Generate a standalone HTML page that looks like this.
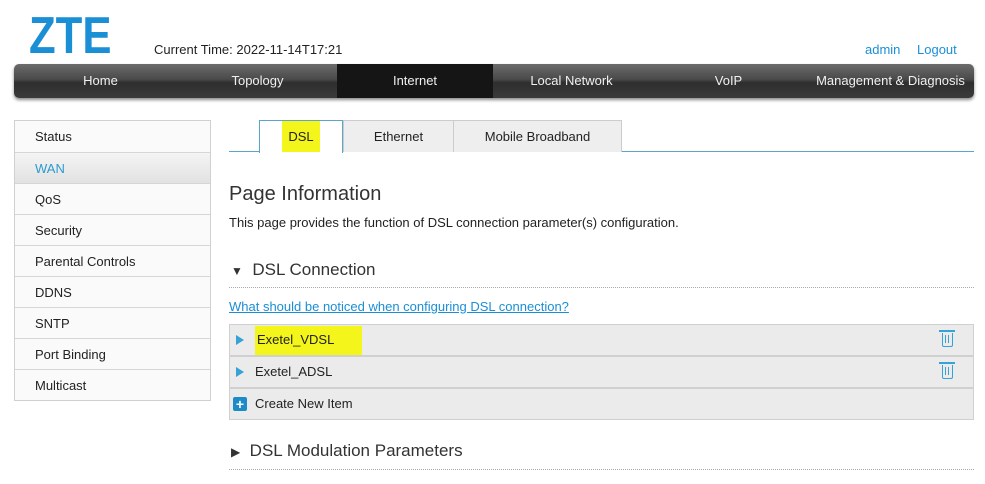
<!DOCTYPE html>
<html><head><meta charset="utf-8"><style>
*{margin:0;padding:0;box-sizing:border-box}
body{width:985px;height:484px;background:#fff;font-family:"Liberation Sans",sans-serif;font-size:13px;color:#222;position:relative;overflow:hidden}
.a{position:absolute;white-space:nowrap}
.logo{left:29px;top:6px;font-size:52px;font-weight:bold;color:#1a8fd6;letter-spacing:0;transform:scaleX(0.84);transform-origin:left}
.nav{left:14px;top:64px;width:960px;height:34px;border-radius:5px;background:linear-gradient(#6b6b6b,#4a4a4a 45%,#2e2e2e 55%,#3a3a3a);box-shadow:0 2px 3px #888;overflow:hidden}
.nav div{position:absolute;top:0;height:34px;line-height:34px;width:157px;text-align:center;color:#f0f0f0;font-size:13px}
.nav .act{background:#151515}
.side{left:14px;top:120px;width:197px;border:1px solid #d0d0d0;background:#fafafa}
.side div{height:31px;line-height:31px;padding-left:20px;border-top:1px solid #d6d6d6}
.side div:first-child{border-top:0}
.tab{top:120px;height:32px;line-height:32px;text-align:center;border:1px solid #ccc;border-bottom:0;background:#eee}
.row{left:229px;width:745px;height:32px;background:#ebebeb;border:1px solid #d0d0d0;line-height:30px;padding-left:25px}
.tri{position:absolute;left:6px;top:10px;border-left:8px solid #35a3d6;border-top:5px solid transparent;border-bottom:5px solid transparent}
.bin{position:absolute;right:20px;top:8px;width:11px;height:14px;border:1.5px solid #35a3d6;border-top:none;border-radius:0 0 2px 2px}
.bin:before{content:"";position:absolute;left:-4px;top:-3px;width:16px;height:2px;background:#35a3d6}
.bin:after{content:"";position:absolute;left:2px;top:2px;width:1px;height:8px;background:#35a3d6;box-shadow:3px 0 #35a3d6}
.hl{background:#f4f51a}
.dot{left:229px;width:745px;border-top:1px dotted #aaa}
</style></head><body>
<div class="a logo">ZTE</div>
<div class="a" style="left:154px;top:42px">Current Time: 2022-11-14T17:21</div>
<div class="a" style="left:865px;top:42px;color:#1a8fd6">admin</div>
<div class="a" style="left:917px;top:42px;color:#1a8fd6">Logout</div>
<div class="a nav">
<div style="left:8px">Home</div><div style="left:165px">Topology</div><div class="act" style="left:323px;width:156px">Internet</div><div style="left:479px">Local Network</div><div style="left:636px">VoIP</div><div style="left:793px;width:167px">Management &amp; Diagnosis</div>
</div>
<div class="a side">
<div>Status</div><div style="background:linear-gradient(#f4f4f4,#e2e2e2);color:#2b9bcf">WAN</div><div>QoS</div><div>Security</div><div>Parental Controls</div><div>DDNS</div><div>SNTP</div><div>Port Binding</div><div>Multicast</div>
</div>
<div class="a" style="left:229px;top:151px;width:745px;border-top:1px solid #5aa5cc"></div>
<div class="a tab" style="left:259px;width:84px;background:#fff;border-color:#5aa5cc;height:33px"><span class="hl" style="padding:8px 6px">DSL</span></div>
<div class="a tab" style="left:343px;width:111px">Ethernet</div>
<div class="a tab" style="left:453px;width:169px">Mobile Broadband</div>
<div class="a" style="left:229px;top:183px;font-size:20px;color:#333">Page Information</div>
<div class="a" style="left:229px;top:215px">This page provides the function of DSL connection parameter(s) configuration.</div>
<div class="a" style="left:231px;top:260px;font-size:17px;color:#333"><span style="font-size:12px">▼</span>&nbsp; DSL Connection</div>
<div class="a dot" style="top:287px"></div>
<div class="a" style="left:229px;top:299px;color:#1a8fd6;text-decoration:underline">What should be noticed when configuring DSL connection?</div>
<div class="a row" style="top:324px"><span class="tri"></span><span class="hl" style="padding:6px 28px 8px 2px">Exetel_VDSL</span><span class="bin"></span></div>
<div class="a row" style="top:356px"><span class="tri"></span>Exetel_ADSL<span class="bin"></span></div>
<div class="a row" style="top:388px"><span style="position:absolute;left:3px;top:8px;width:14px;height:14px;background:#1e8bc9;color:#fff;font-weight:bold;line-height:14px;text-align:center;font-size:14px;border-radius:2px">+</span>Create New Item</div>
<div class="a" style="left:231px;top:441px;font-size:17px;color:#333"><span style="font-size:12px">▶</span>&nbsp; DSL Modulation Parameters</div>
<div class="a dot" style="top:469px"></div>
</body></html>
